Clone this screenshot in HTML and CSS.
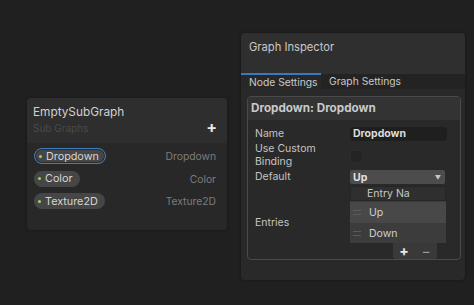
FILE: index.html
```html
<!DOCTYPE html>
<html>
<head>
    <title>Shader Graph - Sub Graph Dropdown</title>
    <meta charset="UTF-8">
    <link rel="stylesheet" href="styles.css">
</head>
<body>
    <div class="canvas">
        <div class="blackboard">
            <div class="bb-header">
                <div class="bb-title">EmptySubGraph</div>
                <div class="bb-sub">
                    <span>Sub Graphs</span>
                    <span class="bb-add">+</span>
                </div>
            </div>
            <div class="bb-body">
                <div class="bb-row">
                    <span class="pill selected"><span class="dot"></span>Dropdown</span>
                    <span class="bb-type">Dropdown</span>
                </div>
                <div class="bb-row">
                    <span class="pill"><span class="dot"></span>Color</span>
                    <span class="bb-type">Color</span>
                </div>
                <div class="bb-row">
                    <span class="pill"><span class="dot"></span>Texture2D</span>
                    <span class="bb-type">Texture2D</span>
                </div>
            </div>
        </div>

        <div class="inspector">
            <div class="insp-header">Graph Inspector</div>
            <div class="tabs">
                <div class="tab active">Node Settings</div>
                <div class="tab">Graph Settings</div>
            </div>
            <div class="insp-content">
                <div class="prop-box">
                    <div class="prop-title">Dropdown: Dropdown</div>
                    <div class="prop-body">
                        <div class="prop-label">Name</div>
                        <div class="text-field">Dropdown</div>

                        <div class="prop-label two-line">Use Custom<br>Binding</div>
                        <div class="check-cell"><span class="checkbox"></span></div>

                        <div class="prop-label">Default</div>
                        <div class="select">Up<span class="arrow">&#9660;</span></div>

                        <div class="prop-label">Entries</div>
                        <div class="list">
                            <div class="list-head">Entry Na</div>
                            <div class="list-items">
                                <div class="list-item hover"><span class="handle"></span>Up</div>
                                <div class="list-item"><span class="handle"></span>Down</div>
                            </div>
                            <div class="list-foot">
                                <span class="foot-btn">+</span>
                                <span class="foot-btn minus">&minus;</span>
                            </div>
                        </div>
                    </div>
                </div>
            </div>
        </div>
    </div>
</body>
</html>
```

FILE: styles.css
```css
html, body {
    margin: 0;
    padding: 0;
    background-color: #202020;
    font-family: Inter, "Noto Sans", sans-serif;
    color: #c4c4c4;
}
.canvas {
    display: flex;
    align-items: flex-start;
    gap: 14px;
    padding-left: 27px;
    height: 305px;
    overflow: hidden;
}

/* blackboard */
.blackboard {
    width: 200px;
    margin-top: 98px;
    background-color: #282828;
    border-radius: 4px;
    overflow: hidden;
    box-shadow: 0 0 3px rgba(0,0,0,0.4);
}
.bb-header {
    height: 45px;
    background-color: #2e2e2e;
    padding: 6px 10px 0 6px;
    box-sizing: border-box;
}
.bb-title {
    font-size: 11.8px;
    color: #d2d2d2;
    line-height: 16px;
}
.bb-sub {
    display: flex;
    justify-content: space-between;
    align-items: center;
    margin-top: 1px;
    font-size: 10px;
    color: #4a4a4a;
    line-height: 14px;
}
.bb-add {
    color: #e8e8e8;
    font-size: 16px;
    font-weight: bold;
    margin-top: -2px;
}
.bb-body {
    height: 87px;
    padding: 5px 11px 0 7px;
    box-sizing: border-box;
    display: flex;
    flex-direction: column;
    gap: 6.5px;
}
.bb-row {
    display: flex;
    justify-content: space-between;
    align-items: center;
    height: 16px;
}
.pill {
    display: inline-flex;
    align-items: center;
    height: 16px;
    padding: 0 7px 0 4px;
    box-sizing: border-box;
    border-radius: 8px;
    background-color: #464646;
    font-size: 10.8px;
    color: #d6d6d6;
    white-space: nowrap;
}
.pill.selected {
    border: 1px solid #3f7fbd;
    box-shadow: inset 0 0 0 1px #2a2a2a;
    padding-left: 4px;
    padding-right: 6px;
}
.dot {
    flex: none;
    width: 3px;
    height: 3px;
    border-radius: 50%;
    background-color: #9ad35a;
    margin-right: 4px;
}
.bb-type {
    font-size: 10.3px;
    color: #7c7c7c;
}

/* inspector */
.inspector {
    width: 224px;
    height: 247px;
    margin-top: 33px;
    background-color: #292929;
    border-radius: 4px;
    overflow: hidden;
    box-shadow: 0 0 3px rgba(0,0,0,0.4);
}
.insp-header {
    height: 41px;
    background-color: #2f2f2f;
    padding: 7px 8px 0;
    box-sizing: border-box;
    font-size: 11.2px;
    color: #c8c8c8;
}
.tabs {
    display: flex;
    height: 15px;
    background-color: #232323;
}
.tab {
    font-size: 10.3px;
    line-height: 15px;
    padding: 0 8px;
    color: #c8c8c8;
    white-space: nowrap;
}
.tab.active {
    width: 80px;
    box-sizing: border-box;
    background-color: #282828;
    border-top: 2px solid #3a79bb;
    line-height: 14px;
    margin-top: -1px;
    height: 16px;
}
.insp-content {
    padding: 7px 4px 0 6px;
}
.prop-box {
    height: 164px;
    border: 1px solid #4a4a4a;
    border-radius: 4px;
    box-sizing: border-box;
}
.prop-title {
    height: 23px;
    background-color: #333333;
    border-radius: 3px 3px 0 0;
    font-size: 11.7px;
    font-weight: bold;
    color: #c9c9c9;
    padding: 4px 3px 0;
    box-sizing: border-box;
}
.prop-body {
    display: grid;
    grid-template-columns: 95px 97px;
    row-gap: 2px;
    padding: 7px 0 0 7px;
    font-size: 10.5px;
    align-items: center;
}
.prop-label {
    color: #c4c4c4;
    line-height: 14px;
}
.prop-label.two-line {
    line-height: 13px;
    margin-top: -1px;
    padding-bottom: 0;
}
.text-field {
    height: 14px;
    line-height: 14px;
    background-color: #1f1f1f;
    border-radius: 3px;
    padding-left: 3px;
    font-weight: bold;
    color: #dcdcdc;
}
.check-cell {
    height: 25px;
    display: flex;
    align-items: center;
}
.checkbox {
    width: 11px;
    height: 11px;
    background-color: #242424;
    border: 1px solid #2c2c2c;
    border-radius: 2px;
    margin-top: 1px;
}
.select {
    display: flex;
    justify-content: space-between;
    align-items: center;
    width: 95px;
    height: 14px;
    background-color: #4c4c4c;
    border-radius: 2px;
    padding: 0 4px 0 3px;
    box-sizing: border-box;
    font-weight: bold;
    color: #e2e2e2;
}
.arrow {
    font-size: 6px;
    color: #c8c8c8;
}
.list {
    width: 96px;
}
.list-head {
    height: 13px;
    line-height: 13px;
    background-color: #2f2f2f;
    border: 1px solid #262626;
    padding-left: 16px;
    color: #c8c8c8;
}
.list-items {
    background-color: #3c3c3c;
    padding-top: 1px;
}
.list-item {
    display: flex;
    align-items: center;
    height: 20px;
    color: #d0d0d0;
}
.list-item.hover {
    background-color: #484848;
    height: 21px;
}
.handle {
    width: 8px;
    height: 3px;
    border-top: 1px solid #5a5a5a;
    border-bottom: 1px solid #5a5a5a;
    margin: 0 8px 0 3px;
}
.list-foot {
    display: flex;
    justify-content: space-around;
    align-items: center;
    width: 44px;
    height: 16px;
    margin-left: 43px;
    background-color: #393939;
    border-radius: 0 0 3px 3px;
}
.foot-btn {
    font-size: 14px;
    font-weight: bold;
    color: #e8e8e8;
    line-height: 16px;
}
.foot-btn.minus {
    color: #9a9a9a;
    font-weight: normal;
}
```
